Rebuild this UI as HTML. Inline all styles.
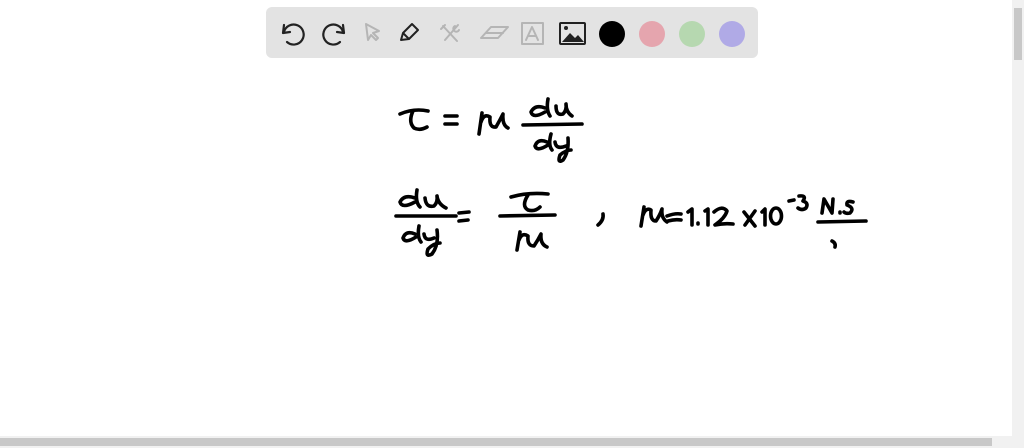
<!DOCTYPE html>
<html><head><meta charset="utf-8"><style>
html,body{margin:0;padding:0;width:1024px;height:448px;overflow:hidden;background:#fff;font-family:"Liberation Sans",sans-serif}
.tb{position:absolute;left:266px;top:7px;width:492px;height:51px;background:#e3e3e3;border-radius:6px}
.vs{position:absolute;left:1012px;top:0;width:12px;height:436px;background:#f1f1f1}
.vt{position:absolute;left:1014px;top:8px;width:8px;height:52px;background:#c8c8c8}
.hs{position:absolute;left:0;top:436px;width:1024px;height:12px;background:#f1f1f1}
.ht{position:absolute;left:0;top:438px;width:992px;height:8px;background:#c8c8c8}
</style></head><body>
<div class="tb"></div>
<svg width="1024" height="448" style="position:absolute;left:0;top:0" fill="none" stroke-linecap="round" stroke-linejoin="round">
<g stroke="#222" stroke-width="2.2">
<path d="M284 25 L283 33 L290 32"/><path d="M284 32 A10 10 0 1 1 287 42"/>
<path d="M343 25 L344 33 L337 32"/><path d="M343 32 A10 10 0 1 0 340 42"/>
<path d="M401 40 L403 33 L412 24 L418 30 L409 39 Z M403 33 L409 39" stroke-width="2"/>
<rect x="560" y="23" width="25" height="21" rx="1" stroke-width="2"/>
</g>
<path d="M562 42 L570 33 L575 38 L578 35 L584 42 Z" fill="#222"/>
<circle cx="566" cy="28" r="2" fill="#222"/>
<g stroke="#b5b5b5" stroke-width="2">
<path d="M366 24 L368 40 L371 35 L376 40 L378 38 L373 33 L379 31 Z"/>
<path d="M443 26 L457 41 M458 25 L445 40 M441 29 L445 25 M455 26 a3 3 0 1 0 4 4"/>
<path d="M481 38 L491 27 L508 27 L498 38 Z M486 33 L503 33"/>
<rect x="522" y="23" width="21" height="21"/><path d="M526 40 L532 27 L538 40 M528 36 L536 36"/>
</g>
<circle cx="612" cy="34" r="13" fill="#000"/>
<circle cx="652" cy="34" r="13" fill="#e5a5ae"/>
<circle cx="692" cy="34" r="13" fill="#b6d8b0"/>
<circle cx="732" cy="34" r="13" fill="#b0aae6"/>
<g stroke="#000" stroke-width="3.6">
<path d="M400 114 Q414 108 428 111 M413 111 Q408 122 414 128 Q420 131 427 127"/>
<path d="M445 116 L457 116 M445 124 L457 124"/>
<path d="M482 113 L479 134 M481 122 Q484 113 490 117 Q489 128 496 127 Q500 120 503 114 Q502 125 508 128"/>
<path d="M545 108 Q535 104 531 112 Q533 119 545 112 M548 99 Q546 110 550 116 M556 106 Q556 116 563 114 Q567 110 566 104 Q566 112 572 116"/>
<path d="M523 125 L582 124"/>
<path d="M547 142 Q538 138 535 146 Q537 152 548 145 M551 134 Q548 145 552 150 M555 142 Q556 150 566 146 M568 138 Q569 152 563 160 Q557 164 560 155 Q566 150 571 150"/>
<path d="M415 198 Q404 194 400 202 Q402 209 415 202 M417 190 Q415 202 420 207 M425 198 Q426 208 434 206 Q438 202 437 196 Q438 204 446 208"/>
<path d="M396 216 L456 216"/>
<path d="M415 234 Q406 230 403 238 Q405 244 416 237 M419 226 Q417 237 421 242 M424 234 Q425 242 434 238 M437 230 Q439 245 432 254 Q425 258 428 249 Q434 243 440 243"/>
<path d="M459 213 L469 212 M459 221 L468 220"/>
<path d="M511 197 Q528 192 548 194 M528 195 Q521 206 528 210 Q535 212 540 207"/>
<path d="M500 216 L555 215"/>
<path d="M520 232 L517 250 M519 240 Q522 232 528 236 Q527 246 534 246 Q538 240 541 234 Q540 244 547 247"/>
<path d="M603 214 Q604 220 598 225"/>
<path d="M644 207 L641 226 M643 215 Q646 207 651 210 Q650 221 656 221 Q660 215 662 209 Q661 218 667 222"/>
<path d="M667 216 Q675 213 681 214 M668 221 Q675 219 681 220"/>
<path d="M688 212 L692 209 L692 225 M698 223 L698 224 M705 211 L708 209 L708 225 M714 212 Q722 205 727 211 Q725 218 715 225 Q724 223 733 224"/>
<path d="M744 212 L755 226 M755 211 L745 225 M762 212 L765 209 L765 225"/>
<ellipse cx="776" cy="216" rx="5.5" ry="8"/>
<path d="M789 201 L794 200 M799 196 Q807 195 803 201 Q809 203 806 208 Q802 211 798 208"/>
<path d="M822 213 L824 199 L832 213 L833 199 M840 212 L840 213 M853 202 Q846 200 847 205 Q855 208 850 213 Q846 214 844 212"/>
<path d="M818 222 L866 221"/>
<path d="M832 241 Q836 243 835 247"/>
</g>
</svg>
<div class="vs"></div><div class="vt"></div>
<div class="hs"></div><div class="ht"></div>
</body></html>
